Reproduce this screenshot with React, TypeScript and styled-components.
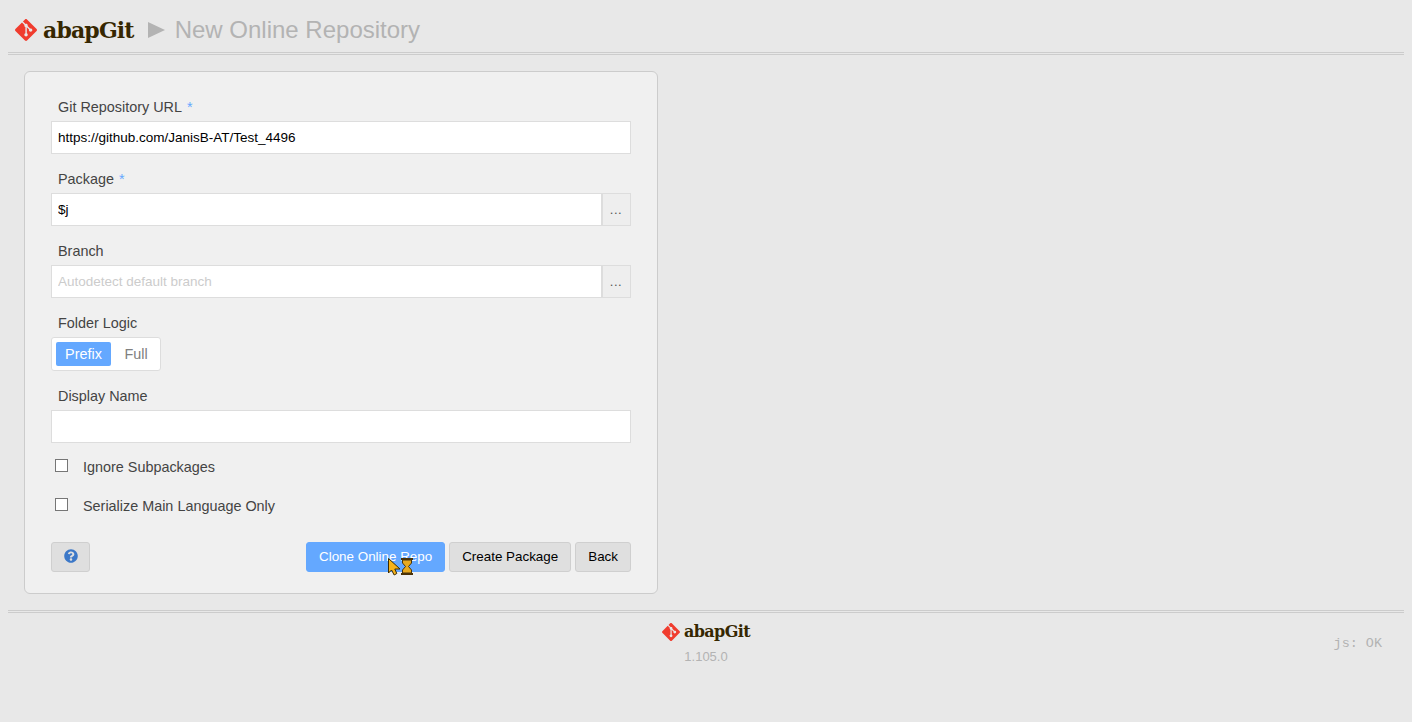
import { FaQuestionCircle } from "react-icons/fa";
import { SiGit } from "react-icons/si";
import styled, { createGlobalStyle } from "styled-components";

const GlobalStyle = createGlobalStyle`
	html,
	body {
		margin: 0;
		height: 100%;
		background-color: #e8e8e8;
	}

	body {
		padding: 0 8px;
		font-family: "Liberation Sans", Arial, sans-serif;
		font-size: 14.4px;
		color: #444444;
		box-sizing: border-box;
	}
`;

const Header = styled.header`
	display: flex;
	align-items: center;
	height: 55px;
	padding: 7px 0 0 7px;
	box-sizing: border-box;
	border-bottom: 3px double #cccccc;
`;

const Logo = styled.div<{ $small?: boolean }>`
	display: flex;
	align-items: center;
	gap: ${(props) => (props.$small ? "4px" : "6px")};
	font-family: "DejaVu Serif", "Liberation Serif", serif;
	font-weight: 700;
	font-size: ${(props) => (props.$small ? "16px" : "22px")};
	letter-spacing: ${(props) => (props.$small ? "-0.6px" : "-0.85px")};
	color: #362701;
`;

const PageTitle = styled.div`
	display: flex;
	align-items: center;
	margin-left: 14px;
	font-size: 24px;
	color: #b3b3b3;
`;

const Arrow = styled.span`
	width: 0;
	height: 0;
	margin-right: 10px;
	border-style: solid;
	border-width: 8px 0 8px 17px;
	border-color: transparent transparent transparent #b3b3b3;
`;

const Card = styled.form`
	width: 634px;
	height: 523px;
	margin: 16px 0 16px 16px;
	padding: 22px 26px 0;
	box-sizing: border-box;
	background-color: #f0f0f0;
	border: 1px solid #cccccc;
	border-radius: 6px;
`;

const Field = styled.div<{ $last?: boolean }>`
	margin-bottom: ${(props) => (props.$last ? "4px" : "12px")};
`;

const Label = styled.div`
	height: 27px;
	padding-left: 7px;
	line-height: 26px;
	color: #444444;
`;

const Required = styled.span`
	margin-left: 5px;
	color: #64a8ff;
`;

const InputRow = styled.div`
	display: flex;
`;

const TextInput = styled.input`
	flex: 1 1 auto;
	min-width: 0;
	height: 33px;
	padding: 0 6px;
	box-sizing: border-box;
	background-color: #ffffff;
	border: 1px solid #dddddd;
	font-family: "Liberation Sans", Arial, sans-serif;
	font-size: 13.5px;
	color: #000000;
	outline: none;

	&::placeholder {
		color: #cccccc;
	}
`;

const BrowseButton = styled.div`
	display: flex;
	flex: 0 0 auto;
	align-items: center;
	justify-content: center;
	width: 29px;
	height: 33px;
	background-color: #eeeeee;
	border: 1px solid #dddddd;
	border-left-width: 0;
	box-sizing: border-box;
	font-size: 13px;
	letter-spacing: 0.5px;
	color: #555555;
	box-shadow: inset 1px 0 0 #dddddd;
`;

const Toggle = styled.div`
	display: flex;
	align-items: center;
	width: 110px;
	height: 34px;
	padding-left: 4px;
	box-sizing: border-box;
	background-color: #ffffff;
	border: 1px solid #dddddd;
	border-radius: 3px;
`;

const ToggleOption = styled.span<{ $active?: boolean }>`
	display: flex;
	flex: 0 0 auto;
	align-items: center;
	justify-content: center;
	width: ${(props) => (props.$active ? "55px" : "50px")};
	height: 24px;
	border-radius: 2px;
	background-color: ${(props) => (props.$active ? "#64a8ff" : "transparent")};
	color: ${(props) => (props.$active ? "#ffffff" : "#808080")};
`;

const CheckRow = styled.div`
	display: flex;
	align-items: center;
	gap: 15px;
	height: 39px;
	padding-left: 4px;
`;

const CheckBox = styled.span`
	width: 13px;
	height: 13px;
	margin-top: -3px;
	box-sizing: border-box;
	background-color: #ffffff;
	border: 1px solid #767676;
`;

const Toolbar = styled.div`
	display: flex;
	align-items: center;
	gap: 4px;
	margin-top: 17px;
`;

const Button = styled.div<{ $primary?: boolean }>`
	position: relative;
	display: flex;
	align-items: center;
	justify-content: center;
	height: 30px;
	padding: 0 12px 1px;
	box-sizing: border-box;
	background-color: ${(props) => (props.$primary ? "#64a8ff" : "#dfdfdf")};
	border: 1px solid ${(props) => (props.$primary ? "#64a8ff" : "#cfcfcf")};
	border-radius: 3px;
	font-size: 13.4px;
	color: ${(props) => (props.$primary ? "#ffffff" : "#000000")};
`;

const HelpButton = styled(Button)`
	width: 39px;
	margin-right: auto;
	padding: 0 0 2px;
	font-size: 14px;
	color: #3c78c8;
`;

const Cursor = styled.svg`
	position: absolute;
	left: 81px;
	top: 15px;
`;

const Footer = styled.footer`
	position: relative;
	display: flex;
	flex-direction: column;
	align-items: center;
	padding-top: 9px;
	border-top: 3px double #cccccc;
`;

const Version = styled.div`
	margin-top: 8px;
	font-size: 13px;
	color: #b3b3b3;
`;

const JsStatus = styled.div`
	position: absolute;
	top: 23px;
	right: 22px;
	font-family: "Liberation Mono", monospace;
	font-size: 13.44px;
	color: #b3b3b3;
`;

function BusyCursor() {
	return (
		<Cursor width="26" height="18" viewBox="0 0 26 18">
			<path
				d="M0.5 0.5 V15 L3.5 12 L6.2 17 L8.8 15.5 L6.8 11 L12 11 Z"
				fill="#f5b21a"
				stroke="#3a2a00"
				strokeWidth="1"
			/>
			<path
				d="M14.5 2 H23.5 V5 L20.5 8.5 L23.5 12 V15 H14.5 V12 L17.5 8.5 L14.5 5 Z"
				fill="#e8a91e"
				stroke="#4a3208"
				strokeWidth="1"
			/>
			<path d="M13 1 H25 M13 16 H25" stroke="#4a3208" strokeWidth="2" />
		</Cursor>
	);
}

interface TextFieldProps {
	label: string;
	required?: boolean;
	value?: string;
	placeholder?: string;
	browse?: boolean;
	last?: boolean;
}

function TextField({ label, required, value, placeholder, browse, last }: TextFieldProps) {
	return (
		<Field $last={last}>
			<Label>
				{label}
				{required && <Required>*</Required>}
			</Label>
			<InputRow>
				<TextInput defaultValue={value} placeholder={placeholder} />
				{browse && <BrowseButton>...</BrowseButton>}
			</InputRow>
		</Field>
	);
}

function App() {
	return (
		<>
			<GlobalStyle />
			<Header>
				<Logo>
					<SiGit size={22} color="#f03c2e" />
					abapGit
				</Logo>
				<PageTitle>
					<Arrow />
					New Online Repository
				</PageTitle>
			</Header>
			<Card>
				<TextField label="Git Repository URL" required value="https://github.com/JanisB-AT/Test_4496" />
				<TextField label="Package" required value="$j" browse />
				<TextField label="Branch" placeholder="Autodetect default branch" browse />
				<Field>
					<Label>Folder Logic</Label>
					<Toggle>
						<ToggleOption $active>Prefix</ToggleOption>
						<ToggleOption>Full</ToggleOption>
					</Toggle>
				</Field>
				<TextField label="Display Name" last />
				<CheckRow>
					<CheckBox />
					Ignore Subpackages
				</CheckRow>
				<CheckRow>
					<CheckBox />
					Serialize Main Language Only
				</CheckRow>
				<Toolbar>
					<HelpButton>
						<FaQuestionCircle />
					</HelpButton>
					<Button $primary>
						Clone Online Repo
						<BusyCursor />
					</Button>
					<Button>Create Package</Button>
					<Button>Back</Button>
				</Toolbar>
			</Card>
			<Footer>
				<Logo $small>
					<SiGit size={18} color="#f03c2e" />
					abapGit
				</Logo>
				<Version>1.105.0</Version>
				<JsStatus>js: OK</JsStatus>
			</Footer>
		</>
	);
}

export default App;
